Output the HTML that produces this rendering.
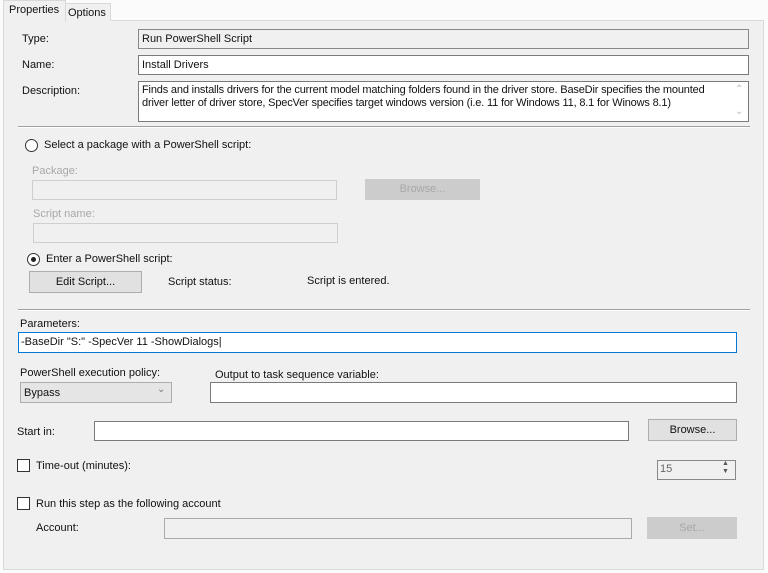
<!DOCTYPE html>
<html><head><style>
body{margin:0;width:768px;height:573px;background:#fbfbfb;font-family:"Liberation Sans",sans-serif;font-size:11px;color:#111;position:relative;overflow:hidden}
.a{position:absolute;white-space:nowrap}
.box{position:absolute;box-sizing:border-box;border:1px solid #7a7a7a;background:#fff}
.dis{background:#f0f0f0;border-color:#cfcfcf}
.btn{position:absolute;box-sizing:border-box;border:1px solid #adadad;background:#e1e1e1;text-align:center}
.g{color:#a8a8a8}
.sep{position:absolute;height:0;border-top:1px solid #a0a0a0;border-bottom:1px solid #fff}
.chk{position:absolute;width:11px;height:11px;border:1px solid #333;background:#fff}
.rad{position:absolute;width:11px;height:11px;border:1px solid #333;border-radius:50%;background:#fff}
</style></head><body>
<div style="position:absolute;left:3px;top:20px;width:759px;height:548px;background:#f0f0f0;border:1px solid #d9d9d9"></div>
<div style="position:absolute;left:3px;top:0;width:61px;height:21px;background:#f0f0f0;border:1px solid #d9d9d9;border-bottom:none"></div>
<div style="position:absolute;left:65px;top:3px;width:44px;height:17px;background:#f0f0f0;border:1px solid #d9d9d9;border-bottom:none"></div>
<div class="a" style="left:9px;top:4px">Properties</div>
<div class="a" style="left:68px;top:7px">Options</div>

<div class="a" style="left:22px;top:33px">Type:</div>
<div class="box" style="left:138px;top:29px;width:611px;height:20px;background:#f0f0f0;border-color:#888"></div>
<div class="a" style="left:142px;top:33px">Run PowerShell Script</div>
<div class="a" style="left:22px;top:59px">Name:</div>
<div class="box" style="left:138px;top:55px;width:611px;height:20px"></div>
<div class="a" style="left:142px;top:59px">Install Drivers</div>
<div class="a" style="left:22px;top:85px">Description:</div>
<div class="box" style="left:138px;top:81px;width:611px;height:41px"></div>
<div class="a" style="left:142px;top:84px;line-height:13px;letter-spacing:-0.17px">Finds and installs drivers for the current model matching folders found in the driver store. BaseDir specifies the mounted<br>driver letter of driver store, SpecVer specifies target windows version (i.e. 11 for Windows 11, 8.1 for Winows 8.1)</div>
<div class="a" style="left:735px;top:84px;color:#bbb;font-size:10px">&#8963;</div>
<div class="a" style="left:735px;top:106px;color:#bbb;font-size:10px">&#8964;</div>
<div class="sep" style="left:18px;top:126px;width:732px"></div>

<div class="rad" style="left:25px;top:139px"></div>
<div class="a" style="left:44px;top:139px">Select a package with a PowerShell script:</div>
<div class="a g" style="left:32px;top:165px">Package:</div>
<div class="box dis" style="left:32px;top:180px;width:305px;height:20px"></div>
<div class="btn g" style="left:365px;top:179px;width:115px;height:21px;background:#ccc;border-color:#ccc;line-height:19px">Browse...</div>
<div class="a g" style="left:33px;top:208px">Script name:</div>
<div class="box dis" style="left:33px;top:223px;width:305px;height:20px"></div>
<div class="rad" style="left:27px;top:253px"></div>
<div style="position:absolute;left:31px;top:257px;width:5px;height:5px;border-radius:50%;background:#222"></div>
<div class="a" style="left:46px;top:253px">Enter a PowerShell script:</div>
<div class="btn" style="left:29px;top:271px;width:113px;height:22px;line-height:20px">Edit Script...</div>
<div class="a" style="left:168px;top:276px">Script status:</div>
<div class="a" style="left:307px;top:275px">Script is entered.</div>
<div class="sep" style="left:18px;top:309px;width:732px"></div>

<div class="a" style="left:20px;top:318px">Parameters:</div>
<div class="box" style="left:18px;top:332px;width:719px;height:21px;border-color:#0078d7"></div>
<div class="a" style="left:21px;top:336px">-BaseDir "S:" -SpecVer 11 -ShowDialogs|</div>
<div class="a" style="left:20px;top:367px">PowerShell execution policy:</div>
<div class="box" style="left:20px;top:382px;width:152px;height:21px;background:#e5e5e5;border-color:#adadad"></div>
<div class="a" style="left:24px;top:387px">Bypass</div>
<div class="a" style="left:157px;top:384px;color:#777;font-size:10px">&#8964;</div>
<div class="a" style="left:215px;top:369px">Output to task sequence variable:</div>
<div class="box" style="left:210px;top:382px;width:527px;height:21px"></div>

<div class="a" style="left:17px;top:426px">Start in:</div>
<div class="box" style="left:94px;top:421px;width:535px;height:20px"></div>
<div class="btn" style="left:648px;top:419px;width:89px;height:22px;line-height:20px">Browse...</div>

<div class="chk" style="left:17px;top:459px"></div>
<div class="a" style="left:36px;top:460px">Time-out (minutes):</div>
<div class="box" style="left:657px;top:460px;width:79px;height:20px;background:#f0f0f0;border-color:#888"></div>
<div class="a" style="left:660px;top:463px;color:#666">15</div>
<div class="a" style="left:722px;top:460px;font-size:7px;color:#555;line-height:8px">&#9650;<br>&#9660;</div>

<div class="chk" style="left:17px;top:497px"></div>
<div class="a" style="left:36px;top:498px">Run this step as the following account</div>
<div class="a" style="left:36px;top:522px">Account:</div>
<div class="box dis" style="left:164px;top:518px;width:468px;height:21px;border-color:#aaa"></div>
<div class="btn g" style="left:647px;top:517px;width:90px;height:22px;background:#ccc;border-color:#ccc;line-height:20px">Set...</div>
</body></html>
